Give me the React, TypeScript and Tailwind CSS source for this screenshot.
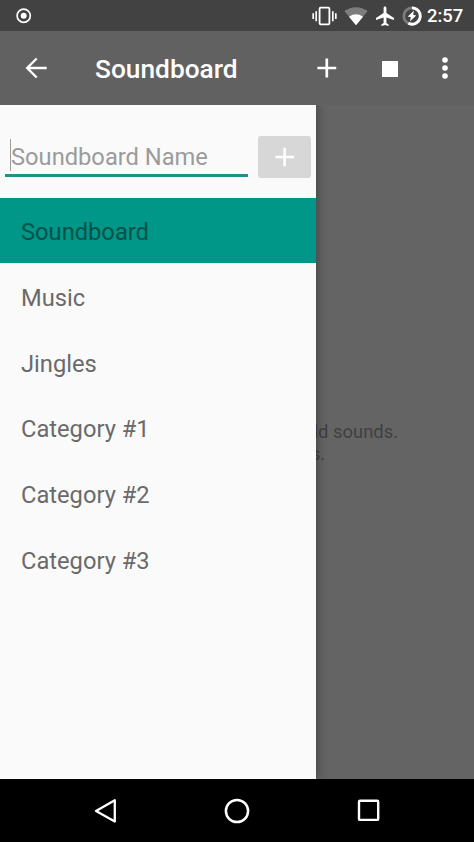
import React from "react";

const categories = ["Soundboard", "Music", "Jingles", "Category #1", "Category #2", "Category #3"];

function StatusBar() {
  return (
    <header className="flex h-[31px] shrink-0 items-center bg-[#424242] pl-4 pr-[10px]">
      <svg width="16" height="16" viewBox="0 0 16 16" fill="none">
        <circle cx="7.7" cy="7.8" r="6.6" stroke="#fff" strokeWidth="1.7" />
        <circle cx="7.7" cy="7.8" r="3" fill="#fff" />
      </svg>
      <svg className="ml-auto" width="25" height="20" viewBox="0 0 25 20" fill="none" stroke="#fff">
        <rect x="7.6" y="1.7" width="9.8" height="16.6" rx="1" strokeWidth="1.8" />
        <path d="M4.2 5.2v10M20.8 5.2v10" strokeWidth="1.7" />
        <path d="M1.2 7.3v5.7M23.8 7.3v5.7" strokeWidth="1.7" />
      </svg>
      <svg className="ml-[7px]" width="24" height="20" viewBox="0 0 24 20">
        <path d="M0.3 5C7-.1 17-.1 23.7 5L12 19.3z" fill="#7c7c7c" />
        <path d="M5 10.7Q12 5.8 19 10.7L12 19.3z" fill="#fff" />
      </svg>
      <svg className="ml-[7px]" width="20" height="20" viewBox="2 2 20 20" fill="#fff">
        <path d="M21 16v-2l-7.6-5V3.9a1.4 1.4 0 0 0-2.8 0V9L3 14v2l7.6-2.5V19l-2.2 1.5V22l3.6-1 3.6 1v-1.5L13.4 19v-5.5z" />
      </svg>
      <svg className="ml-[7px]" width="20" height="20" viewBox="0 0 20 20" fill="none">
        <circle cx="10" cy="10" r="8.2" stroke="#7c7c7c" strokeWidth="2.8" />
        <path d="M10 1.8a8.2 8.2 0 1 1-3.7 15.5" stroke="#fff" strokeWidth="2.8" />
        <path d="M12.1 4.6 5.8 10.6l3.1.7-1 4.2 6.3-6-3.1-.8z" fill="#fff" />
      </svg>
      <time className="ml-[5px] w-[37px] whitespace-nowrap pt-px text-[18.4px] leading-5 font-medium text-white">2:57</time>
    </header>
  );
}

function Toolbar() {
  return (
    <div className="flex h-[74px] shrink-0 items-center bg-[#616161] pl-[25px] pr-[26px] text-white">
      <svg width="23" height="22" viewBox="0 0 23 22" fill="none" stroke="#fff" strokeWidth="2.4">
        <path d="M21.7 11H2.6M11.7 1.5 2.2 11l9.5 9.5" />
      </svg>
      <h1 className="ml-[47px] pt-px text-[26.3px] leading-8 font-medium">Soundboard</h1>
      <svg className="ml-auto" width="20" height="20" viewBox="0 0 20 20" stroke="#fff" strokeWidth="2.7">
        <path d="M9.8 .6v18.8M.4 10h18.8" />
      </svg>
      <div className="ml-[45px] mt-px size-[16px] bg-white" />
      <svg className="ml-[44px]" width="6" height="22" viewBox="0 0 6 22" fill="#fff">
        <circle cx="3" cy="3" r="2.8" />
        <circle cx="3" cy="11" r="2.8" />
        <circle cx="3" cy="19" r="2.8" />
      </svg>
    </div>
  );
}

function Drawer() {
  return (
    <aside className="relative z-10 flex w-[316px] shrink-0 flex-col bg-[#fafafa] shadow-[1px_0_10px_rgba(0,0,0,0.36)]">
      <div className="flex h-[92.6px] shrink-0 pl-[5px] pt-[31px]">
        <div className="mr-[10px] flex h-[41px] w-[243px] items-center border-b-3 border-[#1f9285] pl-[5px]">
          <span className="h-[32px] w-px bg-[#9b9b9b]" />
          <span className="whitespace-nowrap pt-[3px] text-[23.7px] leading-7 text-[#9b9b9b]">Soundboard Name</span>
        </div>
        <button className="flex h-[42px] w-[53px] items-center justify-center rounded-[3px] bg-[#d7d7d7]">
          <svg width="20" height="20" viewBox="0 0 20 20" stroke="#fff" strokeWidth="2.6">
            <path d="M9.6.8v18.4M.3 10h18.8" />
          </svg>
        </button>
      </div>
      <nav>
        {categories.map((name, i) => (
          <div
            key={name}
            className={`flex h-[65.8px] items-center pl-[21px] pt-[3px] text-[23.7px] leading-7 ${i === 0 ? "bg-[#009688] text-[#045149]" : "text-[#6a6a6a]"}`}
          >
            {name}
          </div>
        ))}
      </nav>
    </aside>
  );
}

export default function App() {
  return (
    <div className="flex h-[842px] w-[474px] flex-col overflow-hidden bg-black [font-family:Roboto,'Liberation_Sans',sans-serif]">
      <StatusBar />
      <Toolbar />
      <main className="flex h-[674px] shrink-0 overflow-hidden bg-[#646464]">
        <Drawer />
        <div className="flex min-w-0 flex-1 flex-col items-start pt-[316px] text-[18.4px] leading-[21.6px] text-[#404040]">
          <p className="flex w-[82px] justify-end whitespace-nowrap">add sounds.</p>
          <p className="flex w-[9px] justify-end whitespace-nowrap">s.</p>
        </div>
      </main>
      <footer className="flex h-[63px] shrink-0 items-center pl-[94px]">
        <svg width="23" height="26" viewBox="0 0 23 26" fill="none" stroke="#fff" strokeWidth="2.3" strokeLinejoin="round">
          <path d="M20.8 2.2v21.4L2 12.9z" />
        </svg>
        <svg className="ml-[107px]" width="26" height="26" viewBox="0 0 26 26" fill="none" stroke="#fff" strokeWidth="2.5">
          <circle cx="13" cy="13" r="11.1" />
        </svg>
        <svg className="ml-[107px]" width="23" height="23" viewBox="0 0 23 23" fill="none" stroke="#fff" strokeWidth="2.4">
          <rect x="2" y="1.7" width="19.2" height="19.2" rx="1" />
        </svg>
      </footer>
    </div>
  );
}
